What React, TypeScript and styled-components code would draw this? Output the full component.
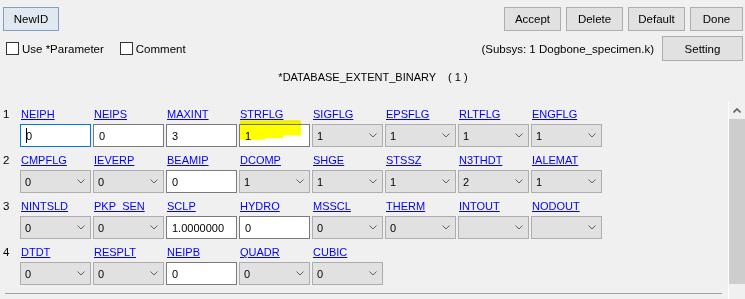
import React from "react";
import styled, { createGlobalStyle } from "styled-components";

const GlobalStyle = createGlobalStyle`
  html, body { margin: 0; padding: 0; background: #f0f0f0; }
  body {
    width: 745px; height: 299px; overflow: hidden;
    font-family: "Liberation Sans", Arial, sans-serif; font-size: 11px; color: #000;
  }
  * { box-sizing: border-box; }
`;

const Page = styled.div`
  width: 745px;
  height: 299px;
  overflow: hidden;
  background: #f0f0f0;
  display: flex;
  flex-direction: column;
`;

const Header = styled.div`
  padding: 7px 2px 0 3px;
  display: flex;
  flex-direction: column;
`;

const BarRow = styled.div<{ $h: number; $mt?: number }>`
  display: flex;
  align-items: center;
  justify-content: space-between;
  height: ${(p) => p.$h}px;
  margin-top: ${(p) => p.$mt ?? 0}px;
`;

const ButtonGroup = styled.div`
  display: flex;
  gap: 5px;
  height: 100%;
`;

const Button = styled.button<{ $w: number; $default?: boolean }>`
  width: ${(p) => p.$w}px;
  height: 100%;
  padding: 0;
  margin: 0;
  font: 11.5px "Liberation Sans", Arial, sans-serif;
  color: #000;
  background: ${(p) => (p.$default ? "#e2e8ef" : "#e1e1e1")};
  border: 1px solid ${(p) => (p.$default ? "#7f9fc6" : "#adadad")};
  border-radius: 0;
`;

const CheckGroup = styled.div`
  display: flex;
  align-items: center;
  margin-left: 3px;
  gap: 16px;
`;

const CheckItem = styled.label`
  display: flex;
  align-items: center;
  gap: 3px;
  line-height: 14px;
  font-size: 11.5px;
`;

const CheckBox = styled.span`
  display: inline-block;
  width: 13px;
  height: 13px;
  border: 1px solid #333;
  background: #fff;
`;

const SubsysGroup = styled.div`
  display: flex;
  align-items: center;
  gap: 8px;
  height: 100%;
`;

const SubsysText = styled.span`
  line-height: 14px;
  font-size: 11.5px;
`;

const Title = styled.div`
  margin-top: 9px;
  height: 14px;
  line-height: 14px;
  display: flex;
  justify-content: center;
`;

const TitleNum = styled.span`
  margin-left: 12px;
`;

const Separator = styled.div`
  margin-top: 11px;
  height: 1px;
  background: #a0a0a0;
`;

const Body = styled.div`
  display: flex;
  align-items: flex-start;
`;

const Form = styled.div`
  margin-left: 5px;
  width: 722px;
  height: 199px;
  padding-top: 12px;
  border-bottom: 1px solid #a0a0a0;
  display: flex;
  flex-direction: column;
`;

const FormRow = styled.div`
  display: grid;
  grid-template-columns: 13px repeat(8, 71px);
  column-gap: 2px;
  height: 46px;
  align-items: start;
`;

const RowNumber = styled.span`
  height: 14px;
  line-height: 14px;
  margin-left: -2px;
  font-size: 11.5px;
`;

const Cell = styled.div`
  position: relative;
  display: flex;
  flex-direction: column;
  gap: 3px;
`;

const FieldLabel = styled.span`
  height: 14px;
  line-height: 14px;
  padding-left: 1px;
  color: #0000ff;
  text-decoration: underline;
  white-space: nowrap;
`;

const TextField = styled.div<{ $focused?: boolean }>`
  height: 23px;
  display: flex;
  align-items: center;
  padding-left: 5px;
  background: #fff;
  border: 1px solid ${(p) => (p.$focused ? "#0078d7" : "#7a7a7a")};
  white-space: nowrap;
`;

const SelectField = styled.div`
  height: 23px;
  display: flex;
  align-items: center;
  justify-content: space-between;
  padding: 0 5px 0 4px;
  background: #e1e1e1;
  border: 1px solid #adadad;
`;

const Caret = styled.span`
  display: inline-block;
  width: 1px;
  height: 15px;
  background: #000;
  margin-right: -1px;
`;

const Highlight = styled.svg`
  position: absolute;
  left: 1px;
  top: 13px;
  width: 62px;
  height: 21px;
  mix-blend-mode: multiply;
  pointer-events: none;
`;

const Scrollbar = styled.div`
  margin-top: 7px;
  margin-left: 6px;
  width: 17px;
  height: 200px;
  border-left: 1px solid #fff;
  display: flex;
  flex-direction: column;
  flex-shrink: 0;
`;

const ScrollArrow = styled.div`
  height: 17px;
  display: flex;
  align-items: center;
  justify-content: center;
  padding-right: 1px;
`;

const ScrollThumb = styled.div`
  height: 165px;
  background: #cdcdcd;
`;

type FieldDef = {
  label: string;
  kind: "text" | "select";
  value: string;
  focused?: boolean;
  highlight?: boolean;
};

const rows: FieldDef[][] = [
  [
    { label: "NEIPH", kind: "text", value: "0", focused: true },
    { label: "NEIPS", kind: "text", value: "0" },
    { label: "MAXINT", kind: "text", value: "3" },
    { label: "STRFLG", kind: "text", value: "1", highlight: true },
    { label: "SIGFLG", kind: "select", value: "1" },
    { label: "EPSFLG", kind: "select", value: "1" },
    { label: "RLTFLG", kind: "select", value: "1" },
    { label: "ENGFLG", kind: "select", value: "1" },
  ],
  [
    { label: "CMPFLG", kind: "select", value: "0" },
    { label: "IEVERP", kind: "select", value: "0" },
    { label: "BEAMIP", kind: "text", value: "0" },
    { label: "DCOMP", kind: "select", value: "1" },
    { label: "SHGE", kind: "select", value: "1" },
    { label: "STSSZ", kind: "select", value: "1" },
    { label: "N3THDT", kind: "select", value: "2" },
    { label: "IALEMAT", kind: "select", value: "1" },
  ],
  [
    { label: "NINTSLD", kind: "select", value: "0" },
    { label: "PKP_SEN", kind: "select", value: "0" },
    { label: "SCLP", kind: "text", value: "1.0000000" },
    { label: "HYDRO", kind: "text", value: "0" },
    { label: "MSSCL", kind: "select", value: "0" },
    { label: "THERM", kind: "select", value: "0" },
    { label: "INTOUT", kind: "select", value: "" },
    { label: "NODOUT", kind: "select", value: "" },
  ],
  [
    { label: "DTDT", kind: "select", value: "0" },
    { label: "RESPLT", kind: "select", value: "0" },
    { label: "NEIPB", kind: "text", value: "0" },
    { label: "QUADR", kind: "select", value: "0" },
    { label: "CUBIC", kind: "select", value: "0" },
  ],
];

const Chevron = () => (
  <svg width="8" height="5" viewBox="0 0 8 5">
    <polyline points="0.5,0.5 4,4 7.5,0.5" fill="none" stroke="#606060" strokeWidth="1" />
  </svg>
);

const UpArrow = () => (
  <svg width="8" height="5" viewBox="0 0 8 5">
    <polyline points="0.5,4.5 4,1 7.5,4.5" fill="none" stroke="#606060" strokeWidth="1.6" />
  </svg>
);

const Field = ({ f }: { f: FieldDef }) => (
  <Cell>
    <FieldLabel>{f.label}</FieldLabel>
    {f.kind === "text" ? (
      <TextField $focused={f.focused}>
        {f.focused && <Caret />}
        {f.value}
      </TextField>
    ) : (
      <SelectField>
        <span>{f.value}</span>
        <Chevron />
      </SelectField>
    )}
    {f.highlight && (
      <Highlight viewBox="0 0 62 21">
        <polygon
          points="0,0.5 58,0 61,1 61,15.5 43,15.5 43,18.3 25,18.3 25,19.7 0,19.7"
          fill="#ffff00"
        />
      </Highlight>
    )}
  </Cell>
);

export default function App() {
  return (
    <Page>
      <GlobalStyle />
      <Header>
        <BarRow $h={24}>
          <Button $w={56} $default>
            NewID
          </Button>
          <ButtonGroup>
            <Button $w={57}>Accept</Button>
            <Button $w={57}>Delete</Button>
            <Button $w={57}>Default</Button>
            <Button $w={53}>Done</Button>
          </ButtonGroup>
        </BarRow>
        <BarRow $h={25} $mt={5}>
          <CheckGroup>
            <CheckItem>
              <CheckBox />
              Use *Parameter
            </CheckItem>
            <CheckItem>
              <CheckBox />
              Comment
            </CheckItem>
          </CheckGroup>
          <SubsysGroup>
            <SubsysText>(Subsys: 1 Dogbone_specimen.k)</SubsysText>
            <Button $w={81}>Setting</Button>
          </SubsysGroup>
        </BarRow>
        <Title>
          <span>*DATABASE_EXTENT_BINARY</span>
          <TitleNum>( 1 )</TitleNum>
        </Title>
      </Header>
      <Separator />
      <Body>
        <Form>
          {rows.map((r, i) => (
            <FormRow key={i}>
              <RowNumber>{i + 1}</RowNumber>
              {r.map((f) => (
                <Field key={f.label} f={f} />
              ))}
            </FormRow>
          ))}
        </Form>
        <Scrollbar>
          <ScrollArrow>
            <UpArrow />
          </ScrollArrow>
          <ScrollThumb />
        </Scrollbar>
      </Body>
    </Page>
  );
}
